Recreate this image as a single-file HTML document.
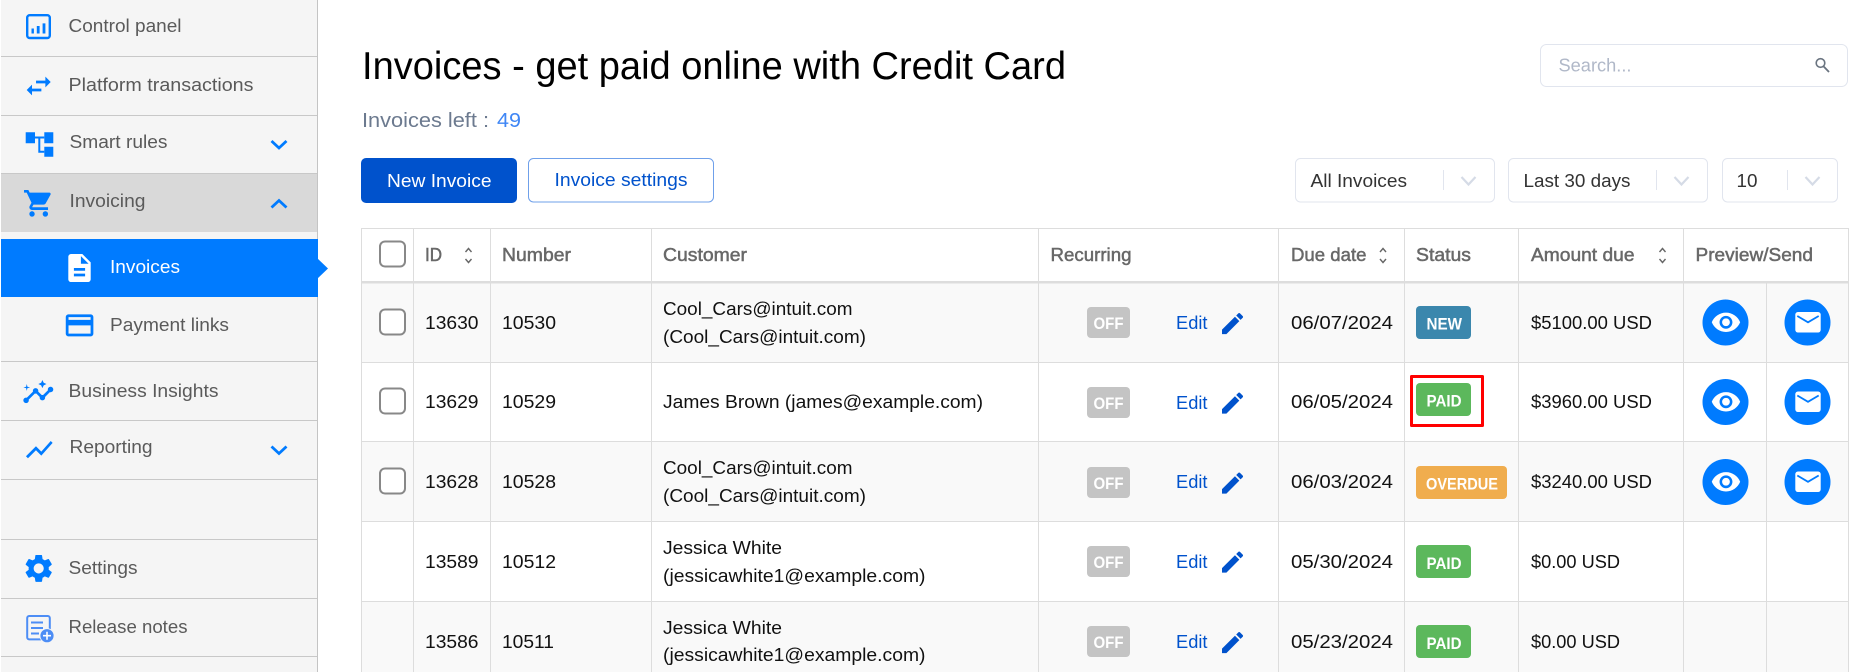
<!DOCTYPE html>
<html lang="en"><head><meta charset="utf-8"><title>Invoices</title>
<style>
html,body{margin:0;padding:0;background:#fff;width:1870px;height:672px;overflow:hidden}
svg{display:block}
text{font-family:"Liberation Sans",Arial,sans-serif;font-size:18.6px}
.s{fill:#5a5a5a}
.h{fill:#686868;stroke:#686868;stroke-width:.5px}
.t{fill:#111}
.e{fill:#0052cc}
.off{fill:#fff;font-weight:bold;font-size:16.5px}
.b{fill:#fff;font-weight:bold;font-size:17px}
.ic{fill:#007bff}
</style></head><body>
<svg xmlns="http://www.w3.org/2000/svg" width="1870" height="672" viewBox="0 0 1870 672">
<rect width="1870" height="672" fill="#fff"/>

<!-- sidebar -->
<rect x="1" y="0" width="316" height="672" fill="#f5f5f5"/>
<rect x="317" y="0" width="1" height="672" fill="#c4c4c4"/>
<rect x="1" y="173" width="316" height="59" fill="#d9d9d9"/>
<rect x="1" y="239" width="317" height="58" fill="#007bff"/>
<polygon points="317,258 328,268.5 317,279" fill="#007bff"/>
<path d="M1 56.5H317M1 115.5H317M1 173.5H317M1 361.5H317M1 420.5H317M1 479.5H317M1 539.5H317M1 598.5H317M1 656.5H317" stroke="#c8c8c8" fill="none"/>

<text class="s" x="68.5" y="32" textLength="113" lengthAdjust="spacingAndGlyphs">Control panel</text>
<text class="s" x="68.5" y="91" textLength="185" lengthAdjust="spacingAndGlyphs">Platform transactions</text>
<text class="s" x="69.5" y="148" textLength="98" lengthAdjust="spacingAndGlyphs">Smart rules</text>
<text class="s" x="69.5" y="207" textLength="76" lengthAdjust="spacingAndGlyphs">Invoicing</text>
<text x="110" y="273" fill="#fff" textLength="70" lengthAdjust="spacingAndGlyphs">Invoices</text>
<text class="s" x="110" y="331" textLength="119" lengthAdjust="spacingAndGlyphs">Payment links</text>
<text class="s" x="68.5" y="397" textLength="150" lengthAdjust="spacingAndGlyphs">Business Insights</text>
<text class="s" x="69.5" y="453" textLength="83" lengthAdjust="spacingAndGlyphs">Reporting</text>
<text class="s" x="68.5" y="574" textLength="69" lengthAdjust="spacingAndGlyphs">Settings</text>
<text class="s" x="68.5" y="633" textLength="119" lengthAdjust="spacingAndGlyphs">Release notes</text>

<!-- sidebar icons -->
<rect x="27.2" y="15.2" width="22.6" height="22.8" rx="2.5" fill="none" stroke="#007bff" stroke-width="2.4"/>
<path class="ic" d="M31.5 28.5h2.4v5h-2.4zM36.8 26h2.8v7.5h-2.8zM42.6 23.4h2.8v10.1h-2.8z"/>
<g transform="translate(22.7 70) scale(1.333)"><path class="ic" d="M6.99 11L3 15l3.99 4v-3H14v-2H6.99v-3zM21 9l-3.99-4v3H10v2h7.01v3L21 9z"/></g>
<path class="ic" d="M25.7 132.3h9.3v11h-9.3zM44.3 132.3h9v11h-9zM44.3 146.7h9v10h-9z"/>
<path d="M35 137.5h9.3M39.3 137.5v14.3h5" fill="none" stroke="#007bff" stroke-width="2"/>
<path d="M271.5 141l7.5 7 7.5-7" fill="none" stroke="#007bff" stroke-width="2.8"/>
<g transform="translate(22.7 187.3) scale(1.333)"><path class="ic" d="M7 18c-1.1 0-1.99.9-1.99 2S5.9 22 7 22s2-.9 2-2-.9-2-2-2zM1 2v2h2l3.6 7.59-1.35 2.45c-.16.28-.25.61-.25.96 0 1.1.9 2 2 2h12v-2H7.42c-.14 0-.25-.11-.25-.25l.03-.12.9-1.63h7.45c.75 0 1.41-.41 1.75-1.03l3.58-6.49c.08-.14.12-.31.12-.48 0-.55-.45-1-1-1H5.21l-.94-2H1zm16 16c-1.1 0-1.99.9-1.99 2s.89 2 1.99 2 2-.9 2-2-.9-2-2-2z"/></g>
<path d="M271.5 207.5l7.5-7 7.5 7" fill="none" stroke="#007bff" stroke-width="2.8"/>
<g transform="translate(62.7 251.2) scale(1.4)"><path fill="#fff" d="M14 2H6c-1.1 0-1.99.9-1.99 2L4 20c0 1.1.89 2 1.99 2H18c1.1 0 2-.9 2-2V8l-6-6zm2 16H8v-2h8v2zm0-4H8v-2h8v2zm-3-5V3.5L18.5 9H13z"/></g>
<g transform="translate(63 308.8) scale(1.38)"><path class="ic" d="M20 4H4c-1.11 0-1.99.89-1.99 2L2 18c0 1.11.89 2 2 2h16c1.11 0 2-.89 2-2V6c0-1.11-.89-2-2-2zm0 14H4v-6h16v6zm0-10H4V6h16v2z"/></g>
<g transform="translate(22 375.9) scale(1.36)"><path class="ic" d="M21 8c-1.45 0-2.26 1.44-1.93 2.51l-3.55 3.56c-.3-.09-.74-.09-1.04 0l-2.55-2.55C12.27 10.45 11.46 9 10 9c-1.45 0-2.27 1.44-1.93 2.52l-4.56 4.55C2.44 15.74 1 16.55 1 18c0 1.1.9 2 2 2 1.45 0 2.26-1.44 1.93-2.51l4.55-4.56c.3.09.74.09 1.04 0l2.55 2.55C12.73 16.55 13.54 18 15 18c1.45 0 2.27-1.44 1.93-2.52l3.56-3.55c1.07.33 2.51-.48 2.51-1.93 0-1.1-.9-2-2-2zM15 9l.94-2.07L18 6l-2.06-.93L15 3l-.92 2.07L12 6l2.08.93zM3.5 11L4 9l2-.5L4 8l-.5-2L3 8l-2 .5L3 9z"/></g>
<g transform="translate(23.3 433.65) scale(1.333)"><path class="ic" d="M3.5 18.49l6-6.01 4 4L22 6.92l-1.41-1.41-7.09 7.97-4-4L2 16.99z"/></g>
<path d="M271.5 446.5l7.5 7 7.5-7" fill="none" stroke="#007bff" stroke-width="2.8"/>
<g transform="translate(21.9 551.6) scale(1.4)"><path class="ic" d="M19.14,12.94c0.04-0.3,0.06-0.61,0.06-0.94c0-0.32-0.02-0.64-0.07-0.94l2.03-1.58c0.18-0.14,0.23-0.41,0.12-0.61 l-1.92-3.32c-0.12-0.22-0.37-0.29-0.59-0.22l-2.39,0.96c-0.5-0.38-1.03-0.7-1.62-0.94L14.4,2.81c-0.04-0.24-0.24-0.41-0.48-0.41 h-3.84c-0.24,0-0.43,0.17-0.47,0.41L9.25,5.35C8.66,5.59,8.12,5.92,7.63,6.29L5.24,5.33c-0.22-0.08-0.47,0-0.59,0.22L2.74,8.87 C2.62,9.08,2.66,9.34,2.86,9.48l2.03,1.58C4.84,11.36,4.8,11.69,4.8,12s0.02,0.64,0.07,0.94l-2.03,1.58 c-0.18,0.14-0.23,0.41-0.12,0.61l1.92,3.32c0.12,0.22,0.37,0.29,0.59,0.22l2.39-0.96c0.5,0.38,1.03,0.7,1.62,0.94l0.36,2.54 c0.05,0.24,0.24,0.41,0.48,0.41h3.84c0.24,0,0.44-0.17,0.47-0.41l0.36-2.54c0.59-0.24,1.13-0.56,1.62-0.94l2.39,0.96 c0.22,0.08,0.47,0,0.59-0.22l1.92-3.32c0.12-0.22,0.07-0.47-0.12-0.61L19.14,12.94z M12,15.6c-1.98,0-3.6-1.62-3.6-3.6 s1.62-3.6,3.6-3.6s3.6,1.62,3.6,3.6S13.98,15.6,12,15.6z"/></g>
<rect x="27.2" y="616" width="22.6" height="23.4" rx="2" fill="none" stroke="#4d8df5" stroke-width="2"/>
<path d="M31 622.5h12M31 628h12M31 633.5h8" stroke="#4d8df5" stroke-width="2" fill="none"/>
<circle cx="47" cy="635.7" r="7.5" fill="#f5f5f5"/>
<circle cx="47" cy="635.7" r="6.6" fill="#4d8df5"/>
<path d="M47 631.7v8M43 635.7h8" stroke="#fff" stroke-width="1.6"/>

<!-- heading -->
<text x="362" y="79" style="font-size:38.5px" fill="#000" textLength="704" lengthAdjust="spacingAndGlyphs">Invoices - get paid online with Credit Card</text>
<text x="362" y="127" style="font-size:20.5px" fill="#6c7a8f" textLength="127" lengthAdjust="spacingAndGlyphs">Invoices left :</text>
<text x="497" y="127" style="font-size:20.5px" fill="#3f86f5" textLength="24" lengthAdjust="spacingAndGlyphs">49</text>

<!-- search -->
<rect x="1540.5" y="44.5" width="307" height="42" rx="6" fill="#fff" stroke="#e1e5ee"/>
<text x="1558.5" y="71.5" fill="#b0b8c8" textLength="73" lengthAdjust="spacingAndGlyphs">Search...</text>
<circle cx="1820.5" cy="63" r="4.3" fill="none" stroke="#6a7480" stroke-width="1.6"/>
<path d="M1823.7 66.5l5.3 5.5" stroke="#6a7480" stroke-width="1.8" fill="none"/>

<!-- buttons -->
<rect x="361" y="158" width="156" height="45" rx="5" fill="#0052cc"/>
<text x="387" y="187" fill="#fff" textLength="104.5" lengthAdjust="spacingAndGlyphs">New Invoice</text>
<rect x="528.5" y="158.5" width="185" height="43.5" rx="5" fill="#fff" stroke="#6fa0ea"/>
<text x="554.5" y="186" fill="#0052cc" textLength="133" lengthAdjust="spacingAndGlyphs">Invoice settings</text>

<!-- dropdowns -->
<rect x="1295.5" y="158.5" width="199" height="43.5" rx="5" fill="#fff" stroke="#e1e5ee"/>
<text x="1310.5" y="187" fill="#333" textLength="96.5" lengthAdjust="spacingAndGlyphs">All Invoices</text>
<path d="M1443.5 170v20" stroke="#e1e5ee"/>
<path d="M1461.5 177l7 7.5 7-7.5" fill="none" stroke="#d5dbe6" stroke-width="2.2"/>
<rect x="1508.5" y="158.5" width="199" height="43.5" rx="5" fill="#fff" stroke="#e1e5ee"/>
<text x="1523.5" y="187" fill="#333" textLength="107" lengthAdjust="spacingAndGlyphs">Last 30 days</text>
<path d="M1656.5 170v20" stroke="#e1e5ee"/>
<path d="M1674.5 177l7 7.5 7-7.5" fill="none" stroke="#d5dbe6" stroke-width="2.2"/>
<rect x="1722.5" y="158.5" width="115" height="43.5" rx="5" fill="#fff" stroke="#e1e5ee"/>
<text x="1736.5" y="187" fill="#333" textLength="21" lengthAdjust="spacingAndGlyphs">10</text>
<path d="M1787.5 170v20" stroke="#e1e5ee"/>
<path d="M1805.5 177l7 7.5 7-7.5" fill="none" stroke="#d5dbe6" stroke-width="2.2"/>

<!-- table backgrounds -->
<rect x="361" y="283" width="1487" height="79" fill="#f9f9f9"/>
<rect x="361" y="441" width="1487" height="80" fill="#f9f9f9"/>
<rect x="361" y="601" width="1487" height="71" fill="#f9f9f9"/>
<path d="M361 228.5H1849M361 362.5H1849M361 441.5H1849M361 521.5H1849M361 601.5H1849M361.5 228V672M413.5 228V672M490.5 228V672M651.5 228V672M1038.5 228V672M1278.5 228V672M1404.5 228V672M1518.5 228V672M1683.5 228V672M1766.5 283V672M1848.5 228V672" stroke="#ddd" fill="none"/>
<rect x="361" y="281" width="1488" height="2.5" fill="#ddd"/>

<!-- header -->
<rect x="380" y="241.5" width="25" height="25" rx="5" fill="#fff" stroke="#888" stroke-width="2"/>
<text class="h" x="425" y="261" textLength="17" lengthAdjust="spacingAndGlyphs">ID</text>
<path d="M465.5 252l3-3.5 3 3.5M465.5 259l3 3.5 3-3.5" fill="none" stroke="#666" stroke-width="1.4"/>
<text class="h" x="502" y="261" textLength="69" lengthAdjust="spacingAndGlyphs">Number</text>
<text class="h" x="663" y="261" textLength="84" lengthAdjust="spacingAndGlyphs">Customer</text>
<text class="h" x="1050.5" y="261" textLength="81" lengthAdjust="spacingAndGlyphs">Recurring</text>
<text class="h" x="1291" y="261" textLength="75.5" lengthAdjust="spacingAndGlyphs">Due date</text>
<path d="M1380 252l3-3.5 3 3.5M1380 259l3 3.5 3-3.5" fill="none" stroke="#666" stroke-width="1.4"/>
<text class="h" x="1416" y="261" textLength="55" lengthAdjust="spacingAndGlyphs">Status</text>
<text class="h" x="1531" y="261" textLength="103.5" lengthAdjust="spacingAndGlyphs">Amount due</text>
<path d="M1659.5 252l3-3.5 3 3.5M1659.5 259l3 3.5 3-3.5" fill="none" stroke="#666" stroke-width="1.4"/>
<text class="h" x="1695.5" y="261" textLength="117.5" lengthAdjust="spacingAndGlyphs">Preview/Send</text>

<!-- row 1 -->
<rect x="380" y="309.5" width="25" height="25" rx="5" fill="#fff" stroke="#888" stroke-width="2"/>
<text class="t" x="425" y="329" textLength="53.5" lengthAdjust="spacingAndGlyphs">13630</text>
<text class="t" x="502" y="329" textLength="54" lengthAdjust="spacingAndGlyphs">10530</text>
<text class="t" x="663" y="315" textLength="189.5" lengthAdjust="spacingAndGlyphs">Cool_Cars@intuit.com</text>
<text class="t" x="663" y="343" textLength="203" lengthAdjust="spacingAndGlyphs">(Cool_Cars@intuit.com)</text>
<rect x="1087" y="307" width="43" height="31" rx="4" fill="#c4c4c4"/>
<text class="off" x="1093.5" y="329" textLength="30" lengthAdjust="spacingAndGlyphs">OFF</text>
<text class="e" x="1176" y="329" textLength="31.5" lengthAdjust="spacingAndGlyphs">Edit</text>
<g transform="translate(1218.5 309.5) scale(1.17)"><path class="e" d="M3 17.25V21h3.75L17.81 9.94l-3.75-3.75L3 17.25zM20.71 7.04c.39-.39.39-1.02 0-1.41l-2.34-2.34c-.39-.39-1.02-.39-1.41 0l-1.83 1.83 3.75 3.75 1.83-1.83z"/></g>
<text class="t" x="1291" y="329" textLength="102" lengthAdjust="spacingAndGlyphs">06/07/2024</text>
<rect x="1416" y="306" width="55" height="33" rx="4" fill="#3b87ad"/>
<text class="b" x="1426.5" y="329.5" textLength="35.5" lengthAdjust="spacingAndGlyphs">NEW</text>
<text class="t" x="1531" y="329" textLength="121" lengthAdjust="spacingAndGlyphs">$5100.00 USD</text>
<circle cx="1725.5" cy="322.5" r="23" fill="#007bff"/>
<g transform="translate(1710.5 306.8) scale(1.29)"><path fill="#fff" d="M12 4.5C7 4.5 2.73 7.61 1 12c1.73 4.39 6 7.5 11 7.5s9.27-3.11 11-7.5c-1.73-4.39-6-7.5-11-7.5zM12 17c-2.76 0-5-2.24-5-5s2.24-5 5-5 5 2.24 5 5-2.24 5-5 5zm0-8c-1.66 0-3 1.34-3 3s1.34 3 3 3 3-1.34 3-3-1.34-3-3-3z"/></g>
<circle cx="1807.5" cy="322.5" r="23" fill="#007bff"/>
<rect x="1795.3" y="312" width="25.4" height="20.5" rx="2.6" fill="#fff"/>
<path d="M1797.3 316l10.7 6.3 10.7-6.3" fill="none" stroke="#007bff" stroke-width="1.8"/>

<!-- row 2 -->
<rect x="380" y="388.5" width="25" height="25" rx="5" fill="#fff" stroke="#888" stroke-width="2"/>
<text class="t" x="425" y="408" textLength="53.5" lengthAdjust="spacingAndGlyphs">13629</text>
<text class="t" x="502" y="408" textLength="54" lengthAdjust="spacingAndGlyphs">10529</text>
<text class="t" x="663" y="408" textLength="320" lengthAdjust="spacingAndGlyphs">James Brown (james@example.com)</text>
<rect x="1087" y="387" width="43" height="31" rx="4" fill="#c4c4c4"/>
<text class="off" x="1093.5" y="409" textLength="30" lengthAdjust="spacingAndGlyphs">OFF</text>
<text class="e" x="1176" y="409" textLength="31.5" lengthAdjust="spacingAndGlyphs">Edit</text>
<g transform="translate(1218.5 389) scale(1.17)"><path class="e" d="M3 17.25V21h3.75L17.81 9.94l-3.75-3.75L3 17.25zM20.71 7.04c.39-.39.39-1.02 0-1.41l-2.34-2.34c-.39-.39-1.02-.39-1.41 0l-1.83 1.83 3.75 3.75 1.83-1.83z"/></g>
<text class="t" x="1291" y="408" textLength="102" lengthAdjust="spacingAndGlyphs">06/05/2024</text>
<rect x="1416" y="383" width="55" height="33" rx="4" fill="#5cb85c"/>
<text class="b" x="1426.5" y="406.5" textLength="35" lengthAdjust="spacingAndGlyphs">PAID</text>
<rect x="1411.5" y="376.5" width="71" height="49" fill="none" stroke="#f00" stroke-width="3" stroke-linejoin="round"/>
<text class="t" x="1531" y="408" textLength="121" lengthAdjust="spacingAndGlyphs">$3960.00 USD</text>
<circle cx="1725.5" cy="402" r="23" fill="#007bff"/>
<g transform="translate(1710.5 386.3) scale(1.29)"><path fill="#fff" d="M12 4.5C7 4.5 2.73 7.61 1 12c1.73 4.39 6 7.5 11 7.5s9.27-3.11 11-7.5c-1.73-4.39-6-7.5-11-7.5zM12 17c-2.76 0-5-2.24-5-5s2.24-5 5-5 5 2.24 5 5-2.24 5-5 5zm0-8c-1.66 0-3 1.34-3 3s1.34 3 3 3 3-1.34 3-3-1.34-3-3-3z"/></g>
<circle cx="1807.5" cy="402" r="23" fill="#007bff"/>
<rect x="1795.3" y="391.5" width="25.4" height="20.5" rx="2.6" fill="#fff"/>
<path d="M1797.3 395.5l10.7 6.3 10.7-6.3" fill="none" stroke="#007bff" stroke-width="1.8"/>

<!-- row 3 -->
<rect x="380" y="468.5" width="25" height="25" rx="5" fill="#fff" stroke="#888" stroke-width="2"/>
<text class="t" x="425" y="488" textLength="53.5" lengthAdjust="spacingAndGlyphs">13628</text>
<text class="t" x="502" y="488" textLength="54" lengthAdjust="spacingAndGlyphs">10528</text>
<text class="t" x="663" y="474" textLength="189.5" lengthAdjust="spacingAndGlyphs">Cool_Cars@intuit.com</text>
<text class="t" x="663" y="502" textLength="203" lengthAdjust="spacingAndGlyphs">(Cool_Cars@intuit.com)</text>
<rect x="1087" y="467" width="43" height="31" rx="4" fill="#c4c4c4"/>
<text class="off" x="1093.5" y="489" textLength="30" lengthAdjust="spacingAndGlyphs">OFF</text>
<text class="e" x="1176" y="488" textLength="31.5" lengthAdjust="spacingAndGlyphs">Edit</text>
<g transform="translate(1218.5 469) scale(1.17)"><path class="e" d="M3 17.25V21h3.75L17.81 9.94l-3.75-3.75L3 17.25zM20.71 7.04c.39-.39.39-1.02 0-1.41l-2.34-2.34c-.39-.39-1.02-.39-1.41 0l-1.83 1.83 3.75 3.75 1.83-1.83z"/></g>
<text class="t" x="1291" y="488" textLength="102" lengthAdjust="spacingAndGlyphs">06/03/2024</text>
<rect x="1416" y="466" width="91" height="33" rx="4" fill="#f0ad4e"/>
<text class="b" x="1426" y="489.5" textLength="72" lengthAdjust="spacingAndGlyphs">OVERDUE</text>
<text class="t" x="1531" y="488" textLength="121" lengthAdjust="spacingAndGlyphs">$3240.00 USD</text>
<circle cx="1725.5" cy="482" r="23" fill="#007bff"/>
<g transform="translate(1710.5 466.3) scale(1.29)"><path fill="#fff" d="M12 4.5C7 4.5 2.73 7.61 1 12c1.73 4.39 6 7.5 11 7.5s9.27-3.11 11-7.5c-1.73-4.39-6-7.5-11-7.5zM12 17c-2.76 0-5-2.24-5-5s2.24-5 5-5 5 2.24 5 5-2.24 5-5 5zm0-8c-1.66 0-3 1.34-3 3s1.34 3 3 3 3-1.34 3-3-1.34-3-3-3z"/></g>
<circle cx="1807.5" cy="482" r="23" fill="#007bff"/>
<rect x="1795.3" y="471.5" width="25.4" height="20.5" rx="2.6" fill="#fff"/>
<path d="M1797.3 475.5l10.7 6.3 10.7-6.3" fill="none" stroke="#007bff" stroke-width="1.8"/>

<!-- row 4 -->
<text class="t" x="425" y="568" textLength="53.5" lengthAdjust="spacingAndGlyphs">13589</text>
<text class="t" x="502" y="568" textLength="54" lengthAdjust="spacingAndGlyphs">10512</text>
<text class="t" x="663" y="554" textLength="119" lengthAdjust="spacingAndGlyphs">Jessica White</text>
<text class="t" x="663" y="582" textLength="262.5" lengthAdjust="spacingAndGlyphs">(jessicawhite1@example.com)</text>
<rect x="1087" y="546" width="43" height="31" rx="4" fill="#c4c4c4"/>
<text class="off" x="1093.5" y="568" textLength="30" lengthAdjust="spacingAndGlyphs">OFF</text>
<text class="e" x="1176" y="568" textLength="31.5" lengthAdjust="spacingAndGlyphs">Edit</text>
<g transform="translate(1218.5 548) scale(1.17)"><path class="e" d="M3 17.25V21h3.75L17.81 9.94l-3.75-3.75L3 17.25zM20.71 7.04c.39-.39.39-1.02 0-1.41l-2.34-2.34c-.39-.39-1.02-.39-1.41 0l-1.83 1.83 3.75 3.75 1.83-1.83z"/></g>
<text class="t" x="1291" y="568" textLength="102" lengthAdjust="spacingAndGlyphs">05/30/2024</text>
<rect x="1416" y="545" width="55" height="33" rx="4" fill="#5cb85c"/>
<text class="b" x="1426.5" y="569" textLength="35" lengthAdjust="spacingAndGlyphs">PAID</text>
<text class="t" x="1531" y="568" textLength="89" lengthAdjust="spacingAndGlyphs">$0.00 USD</text>

<!-- row 5 -->
<text class="t" x="425" y="648" textLength="53.5" lengthAdjust="spacingAndGlyphs">13586</text>
<text class="t" x="502" y="648" textLength="52" lengthAdjust="spacingAndGlyphs">10511</text>
<text class="t" x="663" y="634" textLength="119" lengthAdjust="spacingAndGlyphs">Jessica White</text>
<text class="t" x="663" y="661" textLength="262.5" lengthAdjust="spacingAndGlyphs">(jessicawhite1@example.com)</text>
<rect x="1087" y="626" width="43" height="31" rx="4" fill="#c4c4c4"/>
<text class="off" x="1093.5" y="648" textLength="30" lengthAdjust="spacingAndGlyphs">OFF</text>
<text class="e" x="1176" y="648" textLength="31.5" lengthAdjust="spacingAndGlyphs">Edit</text>
<g transform="translate(1218.5 628.5) scale(1.17)"><path class="e" d="M3 17.25V21h3.75L17.81 9.94l-3.75-3.75L3 17.25zM20.71 7.04c.39-.39.39-1.02 0-1.41l-2.34-2.34c-.39-.39-1.02-.39-1.41 0l-1.83 1.83 3.75 3.75 1.83-1.83z"/></g>
<text class="t" x="1291" y="648" textLength="102" lengthAdjust="spacingAndGlyphs">05/23/2024</text>
<rect x="1416" y="625" width="55" height="33" rx="4" fill="#5cb85c"/>
<text class="b" x="1426.5" y="649" textLength="35" lengthAdjust="spacingAndGlyphs">PAID</text>
<text class="t" x="1531" y="648" textLength="89" lengthAdjust="spacingAndGlyphs">$0.00 USD</text>
</svg>
</body></html>
